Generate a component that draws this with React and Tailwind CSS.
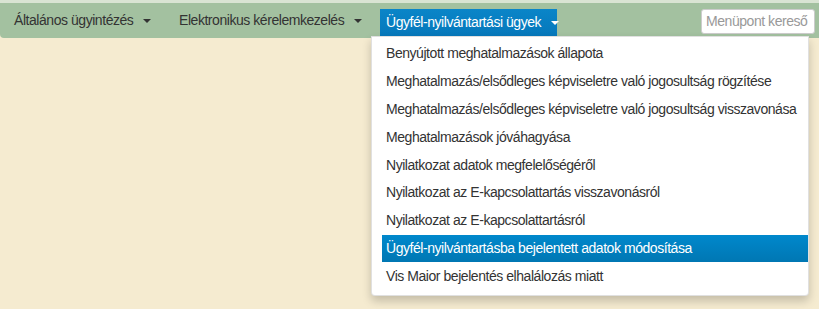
export default function App() {
  const items = [
    "Benyújtott meghatalmazások állapota",
    "Meghatalmazás/elsődleges képviseletre való jogosultság rögzítése",
    "Meghatalmazás/elsődleges képviseletre való jogosultság visszavonása",
    "Meghatalmazások jóváhagyása",
    "Nyilatkozat adatok megfelelőségéről",
    "Nyilatkozat az E-kapcsolattartás visszavonásról",
    "Nyilatkozat az E-kapcsolattartásról",
    "Ügyfél-nyilvántartásba bejelentett adatok módosítása",
    "Vis Maior bejelentés elhalálozás miatt",
  ];
  const Caret = ({ white }) => (
    <span
      className={
        "inline-block shrink-0 w-0 h-0 border-l-[4px] border-r-[4px] border-t-[4px] border-l-transparent border-r-transparent " +
        (white ? "border-t-white" : "border-t-[#333333]")
      }
    />
  );
  return (
    <div
      className="relative w-[819px] h-[309px] overflow-hidden bg-[#f5ebd0] text-[14px] tracking-[-0.45px] text-[#333333]"
      style={{ fontFamily: '"Liberation Sans", Arial, sans-serif' }}
    >
      <div className="h-[38px] w-full border-t-[3px] border-[#d9e4d3] bg-[#a3c1a0] rounded-bl-[4px] flex items-center whitespace-nowrap">
        <div className="w-[179px] shrink-0 flex items-center pl-[14px] gap-[10px]">
          <span>Általános ügyintézés</span>
          <Caret />
        </div>
        <div className="w-[201px] shrink-0 flex items-center gap-[10px]">
          <span>Elektronikus kérelemkezelés</span>
          <Caret />
        </div>
        <div className="self-start mt-[6px] h-[27px] w-[177px] shrink-0 pl-[6px] flex items-center gap-[10px] bg-gradient-to-b from-[#0a85c8] to-[#0678bb] text-white">
          <span>Ügyfél-nyilvántartási ügyek</span>
          <Caret white />
        </div>
        <div className="flex-1" />
        <div className="mr-[4px] mt-[1px] h-[25px] w-[114px] shrink-0 bg-white rounded-[3px] border border-[#cccccc] flex items-center pl-[4px] text-[#999999]">
          Menüpont kereső
        </div>
      </div>
      <div className="absolute left-[371px] top-[36px] w-[438px] bg-white rounded-b-[4px] border border-[rgba(0,0,0,0.12)] shadow-[0_5px_10px_rgba(0,0,0,0.2)] pt-[3px] pb-[5px]">
        {items.map((t, i) => (
          <div
            key={i}
            className={
              "ml-[10px] h-[27.8px] flex items-center pl-[4px] whitespace-nowrap " +
              (i === 7 ? "bg-gradient-to-b from-[#0088cc] to-[#0077b3] text-white" : "")
            }
          >
            {t}
          </div>
        ))}
      </div>
    </div>
  );
}
